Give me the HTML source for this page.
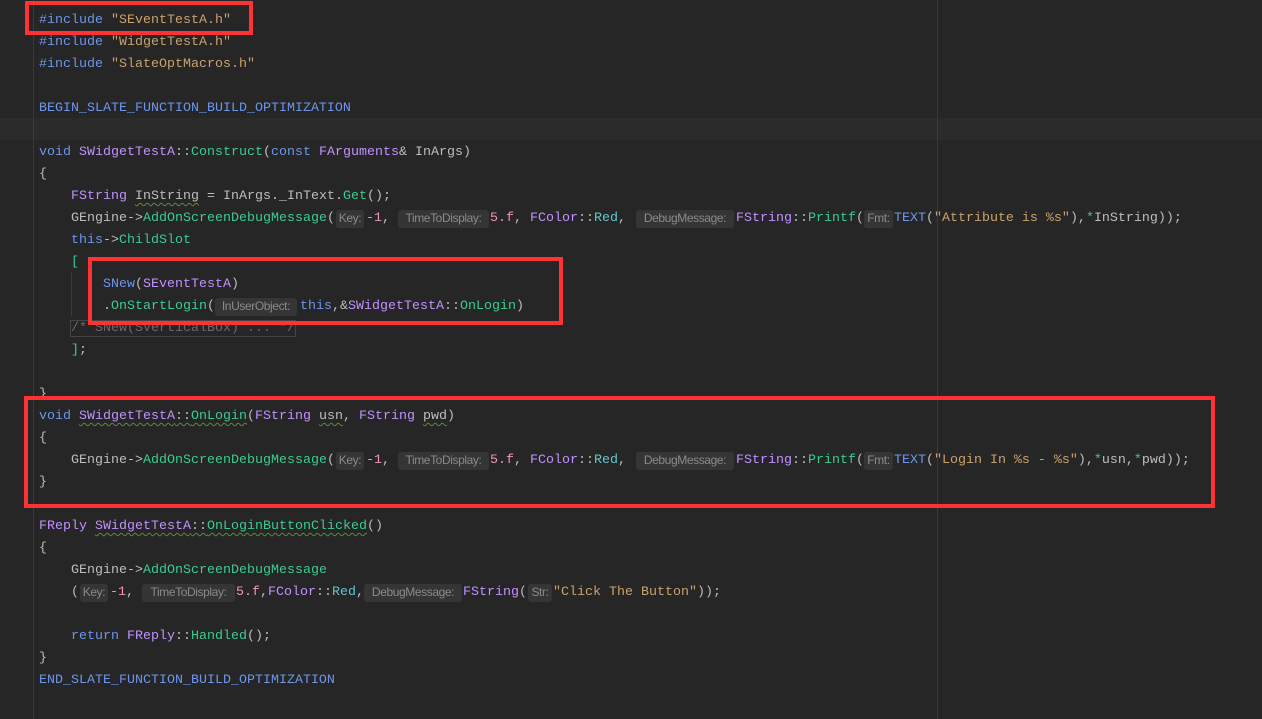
<!DOCTYPE html>
<html><head><meta charset="utf-8"><style>
html,body{margin:0;padding:0;background:#262626;width:1262px;height:719px;overflow:hidden;position:relative}
.ln{position:absolute;left:39px;height:22px;line-height:22px;white-space:pre;font-family:"Liberation Mono",monospace;font-size:13.33px;color:#bdbdbd}
.k{color:#6c95eb}.t{color:#c191ff}.f{color:#39cc8f}.s{color:#c9a26d}.n{color:#ed94c0}.c{color:#66c3cc}.g{color:#6a6a6a}
.h{display:inline-block;height:18px;line-height:16px;vertical-align:top;margin-top:2px;background:#353535;color:#8a8a8a;font-family:"Liberation Sans",sans-serif;font-size:12px;border-radius:3px;text-align:center;overflow:hidden;letter-spacing:-0.4px}
.u{text-decoration:underline wavy #5a8a3a;text-decoration-thickness:1px;text-underline-offset:3px}
.box{position:absolute;border:4px solid #ff3333;box-sizing:border-box}
.vl{position:absolute;width:1px;background:#3a3a3a}
</style></head><body>
<div style="position:absolute;left:0;top:118px;width:1262px;height:22px;background:#2b2b2b"></div>
<div class="vl" style="left:33px;top:0;height:719px"></div>
<div class="vl" style="left:937px;top:0;height:719px;background:#3a3a3a"></div>
<div class="vl" style="left:71px;top:272px;height:44px"></div>

<div class="ln" style="top:10px"><span class="k">#include</span> <span class="s">"SEventTestA.h"</span></div>
<div class="ln" style="top:32px"><span class="k">#include</span> <span class="s">"WidgetTestA.h"</span></div>
<div class="ln" style="top:54px"><span class="k">#include</span> <span class="s">"SlateOptMacros.h"</span></div>
<div class="ln" style="top:98px"><span class="k">BEGIN_SLATE_FUNCTION_BUILD_OPTIMIZATION</span></div>
<div class="ln" style="top:142px"><span class="k">void</span> <span class="t">SWidgetTestA</span>::<span class="f">Construct</span>(<span class="k">const</span> <span class="t">FArguments</span>&amp; InArgs)</div>
<div class="ln" style="top:164px">{</div>
<div class="ln" style="top:186px">    <span class="t">FString</span> <span class="u">InString</span> = InArgs.<span>_InText</span>.<span class="f">Get</span>();</div>
<div class="ln" style="top:208px">    GEngine-&gt;<span class="f">AddOnScreenDebugMessage</span>(<span class="h" style="width:28px;margin-left:1px;margin-right:2px">Key:</span><span class="n">-1</span>, <span class="h" style="width:91px;margin-right:1px">TimeToDisplay:</span><span class="n">5.f</span>, <span class="t">FColor</span>::<span class="c">Red</span>, <span class="h" style="width:98px;margin-left:2px;margin-right:2px">DebugMessage:</span><span class="t">FString</span>::<span class="f">Printf</span>(<span class="h" style="width:29px;margin-right:1px">Fmt:</span><span class="k">TEXT</span>(<span class="s">"Attribute is %s"</span>),<span class="f">*</span>InString));</div>
<div class="ln" style="top:230px">    <span class="k">this</span>-&gt;<span class="f">ChildSlot</span></div>
<div class="ln" style="top:252px">    <span class="f">[</span></div>
<div class="ln" style="top:274px">        <span class="k">SNew</span>(<span class="t">SEventTestA</span>)</div>
<div class="ln" style="top:296px">        .<span class="f">OnStartLogin</span>(<span class="h" style="width:82px;margin-right:3px">InUserObject:</span><span class="k">this</span>,&amp;<span class="t">SWidgetTestA</span>::<span class="f">OnLogin</span>)</div>
<div class="ln" style="top:318px">    <span class="g" style="outline:1px solid #444">/* SNew(SVerticalBox) ... */</span></div>
<div class="ln" style="top:340px">    <span class="f">]</span>;</div>
<div class="ln" style="top:384px">}</div>
<div class="ln" style="top:406px"><span class="k">void</span> <span class="t u">SWidgetTestA</span><span class="u">::</span><span class="f u">OnLogin</span>(<span class="t">FString</span> <span class="u">usn</span>, <span class="t">FString</span> <span class="u">pwd</span>)</div>
<div class="ln" style="top:428px">{</div>
<div class="ln" style="top:450px">    GEngine-&gt;<span class="f">AddOnScreenDebugMessage</span>(<span class="h" style="width:28px;margin-left:1px;margin-right:2px">Key:</span><span class="n">-1</span>, <span class="h" style="width:91px;margin-right:1px">TimeToDisplay:</span><span class="n">5.f</span>, <span class="t">FColor</span>::<span class="c">Red</span>, <span class="h" style="width:98px;margin-left:2px;margin-right:2px">DebugMessage:</span><span class="t">FString</span>::<span class="f">Printf</span>(<span class="h" style="width:29px;margin-right:1px">Fmt:</span><span class="k">TEXT</span>(<span class="s">"Login In %s - %s"</span>),<span class="f">*</span>usn,<span class="f">*</span>pwd));</div>
<div class="ln" style="top:472px">}</div>
<div class="ln" style="top:516px"><span class="t">FReply</span> <span class="t u">SWidgetTestA</span><span class="u">::</span><span class="f u">OnLoginButtonClicked</span>()</div>
<div class="ln" style="top:538px">{</div>
<div class="ln" style="top:560px">    GEngine-&gt;<span class="f">AddOnScreenDebugMessage</span></div>
<div class="ln" style="top:582px">    (<span class="h" style="width:28px;margin-left:1px;margin-right:2px">Key:</span><span class="n">-1</span>, <span class="h" style="width:93px;margin-right:1px">TimeToDisplay:</span><span class="n">5.f</span>,<span class="t">FColor</span>::<span class="c">Red</span>,<span class="h" style="width:98px;margin-right:1px">DebugMessage:</span><span class="t">FString</span>(<span class="h" style="width:24px;margin-left:1px;margin-right:1px">Str:</span><span class="s">"Click The Button"</span>));</div>
<div class="ln" style="top:626px">    <span class="k">return</span> <span class="t">FReply</span>::<span class="f">Handled</span>();</div>
<div class="ln" style="top:648px">}</div>
<div class="ln" style="top:670px"><span class="k">END_SLATE_FUNCTION_BUILD_OPTIMIZATION</span></div>

<div class="box" style="left:25px;top:1px;width:228px;height:34px"></div>
<div class="box" style="left:88px;top:257px;width:475px;height:68px"></div>
<div class="box" style="left:24px;top:396px;width:1191px;height:112px"></div>
</body></html>
